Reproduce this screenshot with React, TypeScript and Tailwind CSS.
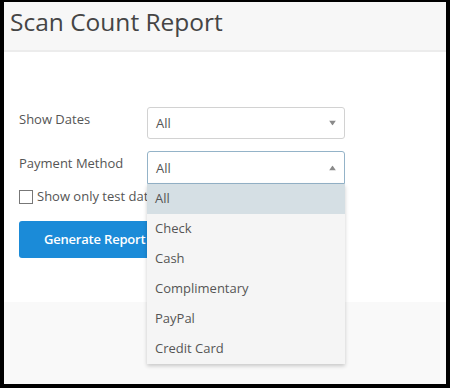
import React from "react";

const options = ["All", "Check", "Cash", "Complimentary", "PayPal", "Credit Card"];

function Caret({ up }: { up?: boolean }) {
  return (
    <svg width="7" height="5" viewBox="0 0 7 5" className="absolute right-[8px] top-1/2 -translate-y-1/2">
      {up ? <path d="M0 5 L3.5 0 L7 5 Z" fill="#8a8a8a" /> : <path d="M0 0 L3.5 5 L7 0 Z" fill="#8a8a8a" />}
    </svg>
  );
}

export default function App() {
  return (
    <div
      className="w-[450px] h-[388px] border-black border-l-4 border-r-4 border-t-2 border-b-4 flex flex-col bg-white text-[#555]"
      style={{ fontFamily: '"Open Sans", "Noto Sans", sans-serif' }}
    >
      <div className="h-[50px] shrink-0 bg-[#f7f7f7] border-b-2 border-[#ececec] px-[6px] flex items-center">
        <h1 className="text-[24.5px] leading-none text-[#454545] -mt-[7px]">Scan Count Report</h1>
      </div>
      <div className="h-[250px] shrink-0 pt-[55px] px-[15px]">
        <div className="flex items-center">
          <div className="w-[128px] text-[13px] -mt-[6px]">Show Dates</div>
          <div className="relative w-[198px] h-[32px] border border-[#d2d2d2] rounded-[3px] flex items-center pl-[8px] text-[13px] text-[#555] pt-[2px]">
            All
            <Caret />
          </div>
        </div>
        <div className="flex items-center mt-[12px]">
          <div className="w-[128px] text-[13px] -mt-[8px]">Payment Method</div>
          <div className="relative w-[198px] h-[33px] border border-[#94b3c8] rounded-t-[3px] flex items-center pl-[8px] text-[13px] pt-[2px]">
            All
            <Caret up />
            <div className="absolute left-[-1px] top-[32px] w-[198px] bg-[#f5f5f5] shadow-[0_2px_4px_rgba(0,0,0,0.2)] z-10">
              {options.map((o, i) => (
                <div
                  key={o}
                  className={
                    "h-[30px] flex items-center pl-[8px] text-[13px] text-[#555] " +
                    (i === 0 ? "bg-[#d5dfe4]" : "")
                  }
                >
                  {o}
                </div>
              ))}
            </div>
          </div>
        </div>
        <div className="flex items-center mt-[6px] h-[14px]">
          <div className="w-[14px] h-[14px] border border-[#777] bg-white" />
          <span className="ml-[4px] text-[13px] text-[#555]">Show only test data</span>
        </div>
        <button className="mt-[17px] h-[37px] pl-[25px] pr-[25px] bg-[#1b8bd8] rounded-[3px] text-white font-semibold text-[13px] tracking-[-0.2px]">
          Generate Report
        </button>
      </div>
      <div className="flex-1 bg-[#f9f9f9]" />
    </div>
  );
}
